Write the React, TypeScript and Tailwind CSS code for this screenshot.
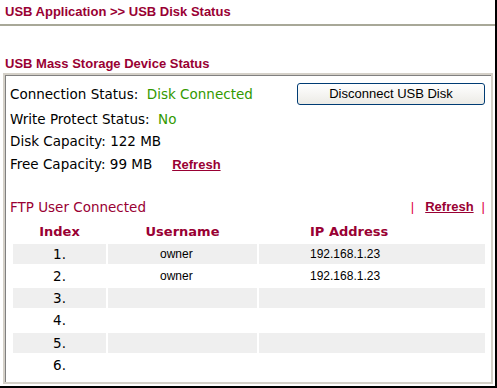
import React from 'react'

const VERDANA = { fontFamily: '"DejaVu Sans", Verdana, sans-serif' }
const ARIAL = { fontFamily: '"Liberation Sans", Arial, sans-serif' }

const USERS = [
  { index: '1.', name: 'owner', ip: '192.168.1.23' },
  { index: '2.', name: 'owner', ip: '192.168.1.23' },
  { index: '3.', name: '', ip: '' },
  { index: '4.', name: '', ip: '' },
  { index: '5.', name: '', ip: '' },
  { index: '6.', name: '', ip: '' },
]

export default function App() {
  return (
    <div className="w-[497px] h-[388px] bg-white border-r-2 border-b-2 border-black overflow-hidden" style={VERDANA}>
      {/* Page title */}
      <div className="h-[26px] border-b-2 border-[#a8a898] px-[5px] pt-[4px]">
        <p className="text-[13px] font-bold text-[#990033] leading-[16px]" style={ARIAL}>
          USB Application &gt;&gt; USB Disk Status
        </p>
      </div>

      <div className="pt-[30px] pl-[3px] pr-[2px]">
        <p className="pl-[2px] text-[13px] font-bold text-[#990033] leading-[16px]" style={ARIAL}>
          USB Mass Storage Device Status
        </p>

        <div className="mt-[1px] h-[311px] border-2 border-[#d4d0c8] shadow-[inset_1px_1px_0_#808080] px-[5px]">
          {/* Disk status */}
          <div className="text-[13.5px] text-black pt-[8px]">
            <div className="flex items-center justify-between h-[22px]">
              <p>
                Connection Status:&nbsp;&nbsp;<span className="text-[#339900]">Disk Connected</span>
              </p>
              <button
                className="w-[188px] h-[22px] rounded-[3px] border border-[#003c74] bg-gradient-to-b from-white to-[#ecebe6] text-[13px] text-black mr-[1px]"
                style={ARIAL}
              >
                Disconnect USB Disk
              </button>
            </div>
            <p className="mt-[3px] leading-[22px]">
              Write Protect Status:&nbsp;&nbsp;<span className="text-[#339900]">No</span>
            </p>
            <p className="leading-[22.5px]">Disk Capacity: 122 MB</p>
            <p className="leading-[23px]">
              Free Capacity: 99 MB
              <a className="ml-[20px] text-[13px] font-bold text-[#990033] underline" style={ARIAL}>Refresh</a>
            </p>
          </div>

          {/* FTP users */}
          <div className="flex items-end justify-between mt-[23px]">
            <p className="text-[13.5px] text-[#990033] leading-[16px]">FTP User Connected</p>
            <p className="flex items-end text-[13px] leading-[16px] mr-[1px]" style={ARIAL}>
              <span className="text-[#e0003c]">|</span>
              <a className="ml-[11px] font-bold text-[#990033] underline">Refresh</a>
              <span className="ml-[8px] text-[#e0003c]">|</span>
            </p>
          </div>

          <table className="w-[476px] ml-[1px] border-separate border-spacing-[2px] mt-[5px]">
            <thead>
              <tr className="text-[13px] font-bold text-[#990033] h-[20px]">
                <th className="w-[93px] text-center">Index</th>
                <th className="w-[149px] text-center">Username</th>
                <th className="text-left pl-[51px]">IP Address</th>
              </tr>
            </thead>
            <tbody>
              {USERS.map((u, i) => (
                <tr key={u.index} className={`h-[20px] ${i % 2 === 0 ? 'bg-[#efefef]' : 'bg-white'}`}>
                  <td className="text-center text-[13.5px]">{u.index}</td>
                  <td className="text-[12px] pl-[52px]" style={ARIAL}>{u.name}</td>
                  <td className="text-[12px] pl-[51px]" style={ARIAL}>{u.ip}</td>
                </tr>
              ))}
            </tbody>
          </table>
        </div>
      </div>
    </div>
  )
}
